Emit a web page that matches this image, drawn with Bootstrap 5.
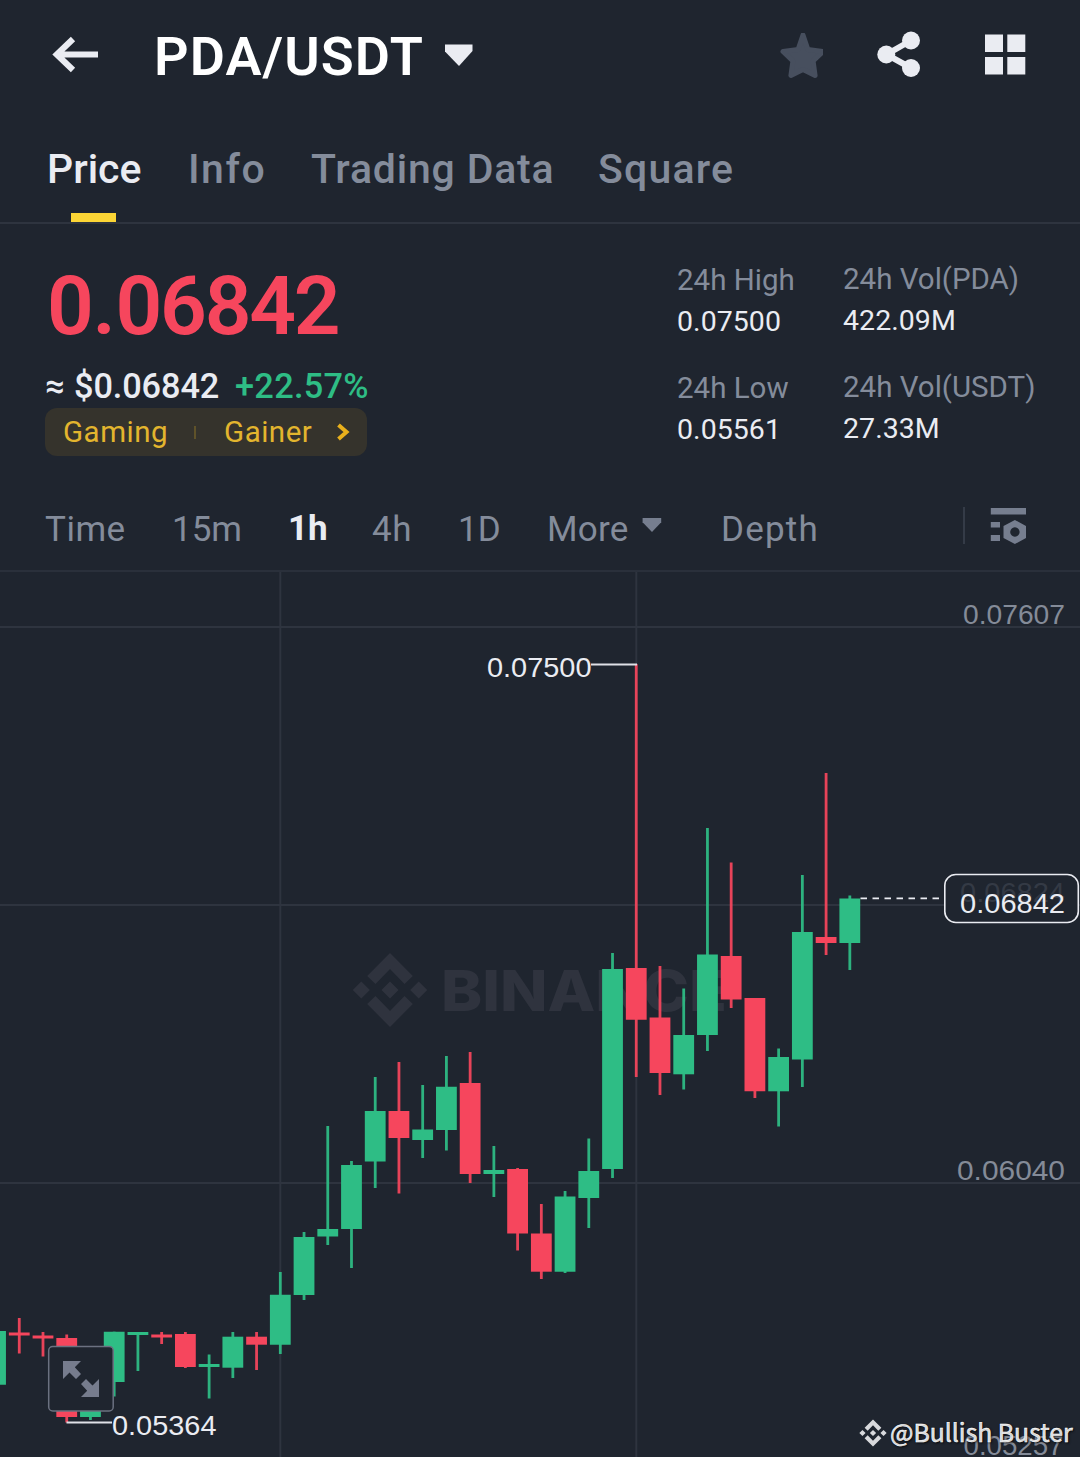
<!DOCTYPE html>
<html lang="en" data-bs-theme="dark">
<head>
<meta charset="utf-8">
<meta name="viewport" content="width=device-width, initial-scale=1">
<title>PDA/USDT</title>
<link href="https://cdn.jsdelivr.net/npm/bootstrap@5.3.0/dist/css/bootstrap.min.css" rel="stylesheet">
<style>
:root{--bg:#1f252f;--mute:#848c9b;--lite:#eaecf2;--up:#2ebd85;--down:#f6465d;--rule:#2e343f}
body{background:var(--bg);color:var(--lite);font-family:Roboto,"Noto Sans",sans-serif;width:1080px;overflow-x:hidden}
svg{display:block;flex:none}
.topbar{height:113px;padding:0 51px 0 52px}
.pair{font-size:54px;line-height:60px;font-weight:600;color:#fff;margin-left:54px;width:289px;letter-spacing:1.100px;white-space:nowrap}
.actions{gap:52px}
.tabbar{height:111px;padding:26px 0 0 47px;border-bottom:2px solid var(--rule)}
.tabbar .nav-link{padding:0;height:83px;font-size:41px;line-height:60px;font-weight:500;color:var(--mute);white-space:nowrap}
.tabbar .nav-link.active{color:var(--lite);position:relative}
.tabbar .nav-link.active::after{content:"";position:absolute;left:24px;bottom:0;width:45px;height:9px;background:#fcd535}
.t-price{width:141px}.t-info{width:123px;letter-spacing:1.5px}.t-data{width:287px;letter-spacing:.8px}.t-square{letter-spacing:1.2px}
.summary{height:276px;padding:35px 0 0 45px}
.quote{width:632px;padding-top:2px}
.last{font-size:82px;line-height:90px;font-weight:600;color:var(--down);letter-spacing:-2.300px;padding-left:2px}
.last span{margin:0 2px 0 1px}
.fiat{font-size:34.3px;line-height:44px;font-weight:500;margin-top:13px;white-space:nowrap}
.fiat .approx{width:29px}.fiat .usd{width:161px;letter-spacing:-.1px}.fiat .chg{color:var(--up);letter-spacing:.3px}
.tagpill{width:322px;height:48px;border-radius:12px;background:#35332c;color:#e3b52e;font-size:29.5px;line-height:49px;padding:0 17px 0 18px}
.tagpill .bar{width:2px;height:13px;background:#5f5229;margin:0 28px 0 26px}
.tagpill span{letter-spacing:.5px;padding-top:1px}
.stats{font-size:29.5px;line-height:42px;white-space:nowrap}
.stats dt{font-weight:400;color:var(--mute);margin:0;line-height:42px}
.stats dd{font-size:28.5px;font-weight:450;margin:0 0 24px;line-height:42px;height:42px;letter-spacing:.05px}
.stats-a{width:166px}
.frames{height:72px;padding-left:45px;border-bottom:2px solid #2a303b;font-size:35px;line-height:59px;color:var(--mute);white-space:nowrap}
.frames span{letter-spacing:.5px}
.f1{width:127px}.f2{width:116px}.f3{width:84px;color:var(--lite);font-weight:700;line-height:57px}.f4{width:86px}.f5{width:89px}.f6{width:95px}.f7{width:242px}
.frames .f2,.frames .f3,.frames .f5{letter-spacing:0}.frames .f6{letter-spacing:.2px}.frames .f7{letter-spacing:1.200px}
.frames .split{width:2px;height:37px;background:#343b47;margin:6.5px 25px 0 0}
.axis,.mark-price{font-family:"Liberation Sans",sans-serif;font-size:27px}
.axis{fill:#848b98}
.mark-price{fill:var(--lite)}
</style>
</head>
<body>
<header class="topbar d-flex align-items-center">
  <svg width="48" height="48" viewBox="52 32.5 48 48" fill="none" stroke="#eaecf2" stroke-width="6.200"><path d="M98 54H58M73 38.500L56.800 54l16.200 15.500"/></svg>
  <div class="pair">PDA/USDT</div>
  <svg width="32" height="48" viewBox="443 32.5 32 48"><path fill="#eaecf2" d="M445 44h27.500v6.500L459 65.500 445 51z"/></svg>
  <div class="actions d-flex ms-auto">
    <svg width="48" height="48" viewBox="775 32.500 48 48"><path fill="#474f5e" stroke="#474f5e" stroke-width="5" stroke-linejoin="round" d="M803 34.500l4.900 14.600 15.100 1.800-9.900 9.600 2 14.500-12.100-6-12.100 6 2-14.500-9.900-9.600 15.100-1.800z"/></svg>
    <svg width="54" height="48" viewBox="875 32.500 54 48" fill="#eaecf2" overflow="visible"><path d="M911 40l-24.500 14L911 67.500" fill="none" stroke="#eaecf2" stroke-width="6"/><circle cx="911" cy="40" r="9"/><circle cx="886.300" cy="54" r="9"/><circle cx="911" cy="67.500" r="9"/></svg>
    <svg width="48" height="48" viewBox="981 32.500 48 48" fill="#eaecf2"><path d="M985 34h18v17.500h-18zM1007.300 34h18v17.500h-18zM985 56.500h18V74h-18zM1007.300 56.500h18V74h-18z"/></svg>
  </div>
</header>
<nav class="tabbar nav flex-nowrap">
  <a class="nav-link active t-price">Price</a>
  <a class="nav-link t-info">Info</a>
  <a class="nav-link t-data">Trading Data</a>
  <a class="nav-link t-square">Square</a>
</nav>
<section class="summary d-flex">
  <div class="quote">
    <div class="last">0<span>.</span>06842</div>
    <div class="fiat d-flex"><span class="approx">≈</span><span class="usd">$0.06842</span><span class="chg">+22.57%</span></div>
    <div class="tagpill d-flex align-items-center">
      <span>Gaming</span><div class="bar"></div><span>Gainer</span>
      <svg class="ms-auto" width="14" height="20" viewBox="336 422 14 20"><path d="M338.500 425l8 7-8 7" fill="none" stroke="#e9b01c" stroke-width="4"/></svg>
    </div>
  </div>
  <dl class="stats stats-a m-0">
    <dt>24h High</dt><dd>0.07500</dd>
    <dt>24h Low</dt><dd>0.05561</dd>
  </dl>
  <dl class="stats mb-0" style="margin-top:-1px">
    <dt>24h Vol(PDA)</dt><dd>422.09M</dd>
    <dt>24h Vol(USDT)</dt><dd>27.33M</dd>
  </dl>
</section>
<div class="frames d-flex">
  <span class="f1">Time</span><span class="f2">15m</span><span class="f3">1h</span><span class="f4">4h</span><span class="f5">1D</span><span class="f6">More</span>
  <svg width="79" height="58" viewBox="642 500 79 58"><path fill="#767e8f" d="M642.600 518h18.600v4.300L652 532l-9.400-9.700z"/></svg>
  <span class="f7">Depth</span>
  <div class="split"></div>
  <svg width="37" height="58" viewBox="990 500 37 58" fill="#767e8f"><path d="M990.800 508h35.200v6.500h-35.200zM990.800 522h9.200v5.500h-9.200zM990.800 535h9.200v6h-9.200z"/><path fill-rule="evenodd" d="M1014.900 520l11.100 6v12l-11.100 6-11.400-6v-12zM1014.900 527.300a4.700 4.700 0 1 0 .01 0z"/></svg>
</div>
<svg id="chart" width="1080" height="885" viewBox="0 572 1080 885">
  <path d="M0 627H1080M0 905H1080M0 1183H1080M280.300 572V1457M636.300 572V1457" stroke="#2e343f" stroke-width="2"/>
  <g fill="#2f333e">
    <path d="M390 953l22.800 23-8.300 8L390 969l-14.500 15-8.300-8zM390 1027l22.800-23-8.300-8L390 1011l-14.500-15-8.300 8zM390 981.500l8.500 8.500-8.500 8.500-8.500-8.500zM361.300 981.500l8.500 8.500-8.500 8.500-8.500-8.500zM418.700 981.500l8.500 8.500-8.500 8.500-8.500-8.500z"/>
    <text x="441" y="1011" font-family="Inter, sans-serif" font-weight="800" font-size="57" textLength="286" lengthAdjust="spacingAndGlyphs">BINANCE</text>
  </g>
  <g id="candles"></g>
  <g class="axis">
    <text x="963" y="624" textLength="102" lengthAdjust="spacingAndGlyphs">0.07607</text>
    <text x="957" y="1180" textLength="108" lengthAdjust="spacingAndGlyphs">0.06040</text>
    <text x="963.500" y="1454.500" textLength="100" lengthAdjust="spacingAndGlyphs">0.05257</text>
  </g>
  <path d="M591 664.500H637M66.500 1422.500H112" stroke="#dfe1e7" stroke-width="1.800"/>
  <path d="M860.500 898.300H940" stroke="#eaecf2" stroke-width="1.800" stroke-dasharray="6.500 5.500"/>
  <rect x="944.800" y="874.500" width="133.500" height="48" rx="11" fill="#1f252f" stroke="#eaecf2" stroke-width="1.600"/>
  <text class="mark-price" x="960" y="902" textLength="105" lengthAdjust="spacingAndGlyphs" style="fill:#343a45">0.06824</text>
  <g class="mark-price">
    <text x="960" y="913" textLength="105" lengthAdjust="spacingAndGlyphs">0.06842</text>
    <text x="487" y="677" textLength="104.500" lengthAdjust="spacingAndGlyphs">0.07500</text>
    <text x="112" y="1434.500" textLength="104.500" lengthAdjust="spacingAndGlyphs">0.05364</text>
  </g>
  <rect x="48.700" y="1346.500" width="64.500" height="64.500" rx="4" fill="#1f252f" stroke="#6b7180" stroke-width="1.500"/>
  <path fill="#767c8d" d="M63 1361h18l-6.200 6.200 6.200 6.800-5 5-6.500-6.500-6.500 6.500zM99 1397H81l6.200-6.200-6.200-6.800 5-5 6.500 6.500 6.500-6.500z"/>
  <path fill="#d8d9dc" transform="translate(873 1433) scale(.367) translate(-390 -990)" d="M390 953l22.800 23-8.300 8L390 969l-14.500 15-8.300-8zM390 1027l22.800-23-8.300-8L390 1011l-14.500-15-8.300 8zM390 981.500l8.500 8.500-8.500 8.500-8.500-8.500zM361.300 981.500l8.500 8.500-8.500 8.500-8.500-8.500zM418.700 981.500l8.500 8.500-8.500 8.500-8.500-8.500z"/>
  <text x="890" y="1442" fill="#fff" font-family="'Noto Sans CJK SC', 'Noto Sans', sans-serif" font-weight="400" font-size="24.500" textLength="182.500" lengthAdjust="spacingAndGlyphs" stroke="#fff" stroke-width=".5" style="text-shadow:1px 1px 2px #000a">@Bullish Buster</text>
</svg>
<script src="https://cdn.jsdelivr.net/npm/bootstrap@5.3.0/dist/js/bootstrap.bundle.min.js"></script>
<script>
// Hourly candles: direction, wick top, body top, body bottom, wick bottom
const candles = [
['u',1331,1331,1384.700,1384.700],['d',1318,1332.500,1335.500,1353.500],['d',1332,1335.500,1338.500,1356.500],['d',1334.500,1338,1417,1422.500],
['u',1400,1405,1417,1420],['u',1331.700,1331.700,1382,1396.500],['u',1332,1332,1335,1371],['d',1332,1334.500,1337.500,1344],
['d',1332,1334,1367,1368],['u',1354.500,1364,1367,1398.500],['u',1332,1336.700,1367.700,1378],['d',1332,1336.700,1344.700,1370],
['u',1272,1294.700,1344.700,1354],['u',1232,1237,1295,1300],['u',1126,1229,1236.500,1245],['u',1161,1165,1229,1268],
['u',1077,1111,1161.500,1188],['d',1062,1111,1138,1193.500],['u',1085,1129.500,1140,1158],['u',1056,1086.700,1130,1150.500],
['d',1052,1083,1174,1183],['u',1146,1170,1174,1197],['d',1168,1169,1233.500,1250.500],['d',1204,1233.500,1271.700,1279],
['u',1191,1196.500,1271.700,1273],['u',1138.500,1171,1198,1228],['u',953,969,1169,1178],['d',664,968,1019.700,1077],
['d',966,1017.500,1073,1095],['u',988.500,1035,1074.300,1089.500],['u',828,954.500,1035,1051],['d',862.500,956,999.500,1008],
['d',998,998,1091.300,1098],['u',1048.500,1057,1091.300,1126.500],['u',875,932,1059.500,1087],['d',773,937,943,955],
['u',895.500,898.500,943,970]];
document.getElementById('candles').innerHTML = candles.map(([d,h,a,b,l],i) => {
  const x = 280.3 + 23.73*(i-12), c = d=='u' ? '#2ebd85' : '#f6465d';
  return `<path fill="${c}" d="M${x-1.4} ${h}h2.800V${l}h-2.800z" opacity=".93"/><path fill="${c}" d="M${x-10.4} ${a}h20.800V${b}h-20.800z"/>`;
}).join('');
</script>
</body>
</html>
